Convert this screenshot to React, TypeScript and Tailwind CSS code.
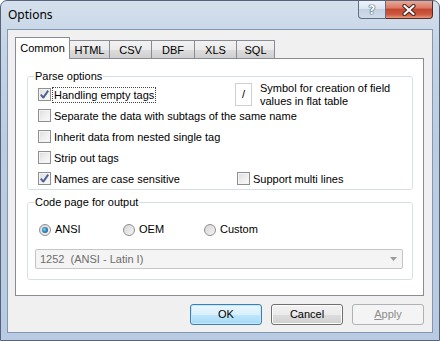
import React from "react";

function Check({ checked }: { checked?: boolean }) {
  return (
    <span className="relative flex h-[13px] w-[13px] shrink-0 items-center justify-center border border-[#8e8f8f] bg-[linear-gradient(135deg,#dcdcdc_0%,#eeeeee_50%,#fbfbfb_100%)] shadow-[inset_0_0_0_1px_#f4f4f4]">
      {checked && (
        <svg width="11" height="11" viewBox="0 0 11 11" className="absolute left-[0px] top-[0px]">
          <path d="M1.8 5.6 L4.3 8.6 L9.2 1.6" fill="none" stroke="#4b5f97" strokeWidth="1.9" strokeLinejoin="round" />
        </svg>
      )}
    </span>
  );
}

function Radio({ checked }: { checked?: boolean }) {
  return (
    <span className="flex h-[12px] w-[12px] shrink-0 items-center justify-center rounded-full border border-[#8e8f8f] bg-[linear-gradient(135deg,#d6d6d6_0%,#f4f4f4_100%)]">
      {checked && (
        <span className="h-[6px] w-[6px] rounded-full bg-[radial-gradient(circle_at_40%_40%,#7ed0f4_0%,#2a78b0_55%,#1c4f86_100%)]" />
      )}
    </span>
  );
}

function Row({ children }: { children: React.ReactNode }) {
  return <div className="flex h-[21px] items-center">{children}</div>;
}

function CheckItem({ checked, label, focus }: { checked?: boolean; label: string; focus?: boolean }) {
  return (
    <div className="flex items-center">
      <Check checked={checked} />
      {focus ? (
        <span className="ml-[1px] border border-dotted border-[#444] px-[1px] leading-[14px]">{label}</span>
      ) : (
        <span className="ml-[3px] leading-[14px]">{label}</span>
      )}
    </div>
  );
}

const tabs = [
  { name: "HTML", w: "w-[40px]" },
  { name: "CSV", w: "w-[42px]" },
  { name: "DBF", w: "w-[43px]" },
  { name: "XLS", w: "w-[42px]" },
  { name: "SQL", w: "w-[38px]" },
];

export default function App() {
  return (
    <div className="h-[341px] w-[440px] bg-white font-['Liberation_Sans',Arial,sans-serif] text-[11px] text-black">
      <div className="flex h-full w-full flex-col overflow-hidden rounded-t-[7px] border border-[#56637a] bg-[linear-gradient(180deg,#d5e0ec_0%,#c6d5e6_12%,#bccde2_40%,#b9cbe2_100%)]">
        {/* title bar */}
        <div className="flex h-[28px] shrink-0 items-start justify-between">
          <div className="pl-[7px] pt-[6px] font-['Noto_Sans',sans-serif] text-[12px] leading-[16px] text-black">Options</div>
          <div className="mr-[6px] flex h-[18px]">
            <div className="flex w-[28px] items-center justify-center rounded-bl-[4px] border border-t-0 border-[#5f6e84] bg-[linear-gradient(180deg,#eef3f9_0%,#dbe5f0_45%,#c3d2e3_50%,#cfdcea_100%)] font-['DejaVu_Sans',sans-serif] text-[12px] font-bold text-white [text-shadow:0_0_1px_#33445c,0_0_1px_#33445c,0_0_1px_#33445c]">
              ?
            </div>
            <div className="flex w-[47px] items-center justify-center rounded-br-[4px] border border-l-0 border-t-0 border-[#5b2a24] bg-[linear-gradient(180deg,#e9a898_0%,#d97a66_40%,#c54630_50%,#cc5a40_80%,#e59a7e_100%)]">
              <svg width="14" height="12" viewBox="0 0 14 12">
                <path d="M2.5 2 L11.5 10 M11.5 2 L2.5 10" stroke="#4a2019" strokeWidth="4.2" strokeLinecap="round" />
                <path d="M2.5 2 L11.5 10 M11.5 2 L2.5 10" stroke="#ffffff" strokeWidth="2.2" strokeLinecap="round" />
              </svg>
            </div>
          </div>
        </div>

        {/* client */}
        <div className="mx-[6px] mb-[7px] flex flex-1 flex-col border border-[#8297b1] bg-[#f0f0f0] pl-[7px] pr-[8px] pt-[7px]">
          {/* tabs */}
          <div className="relative z-10 -mb-px flex h-[22px] items-end">
            <div className="flex h-[22px] w-[55px] items-start justify-center border border-b-0 border-[#898c95] bg-white pt-[3px] leading-[14px]">
              Common
            </div>
            {tabs.map((t) => (
              <div
                key={t.name}
                className={`flex h-[19px] ${t.w} items-center justify-center border border-l-0 border-[#898c95] bg-[linear-gradient(180deg,#f2f2f2_0%,#ebebeb_50%,#dddddd_51%,#cfcfcf_100%)] leading-[14px]`}
              >
                {t.name}
              </div>
            ))}
          </div>

          {/* panel */}
          <div className="flex h-[238px] flex-col border border-[#898c95] bg-white pl-[11px] pr-[10px] pt-[10px]">
            <fieldset className="rounded-[3px] border border-[#d5dfe5] pl-[10px] pr-[6px]">
              <legend className="-ml-[4px] px-[1px] leading-[15px]">Parse options</legend>
              <Row>
                <div className="w-[197px]">
                  <CheckItem checked focus label="Handling empty tags" />
                </div>
                <div className="flex items-center">
                  <div className="flex h-[23px] w-[17px] items-center justify-center border border-[#d0d0d0] bg-white">/</div>
                  <div className="ml-[8px] leading-[13px]">
                    Symbol for creation of field
                    <br />
                    values in flat table
                  </div>
                </div>
              </Row>
              <Row>
                <CheckItem label="Separate the data with subtags of the same name" />
              </Row>
              <Row>
                <CheckItem label="Inherit data from nested single tag" />
              </Row>
              <Row>
                <CheckItem label="Strip out tags" />
              </Row>
              <Row>
                <div className="w-[199px]">
                  <CheckItem checked label="Names are case sensitive" />
                </div>
                <CheckItem label="Support multi lines" />
              </Row>
            </fieldset>

            <fieldset className="mt-[5px] rounded-[3px] border border-[#d5dfe5] pb-[10px] pl-[7px] pr-[9px]">
              <legend className="-ml-[1px] px-[1px] leading-[15px]">Code page for output</legend>
              <div className="mt-[9px] flex h-[21px] items-center pl-[4px]">
                <div className="flex w-[84px] items-center">
                  <Radio checked />
                  <span className="ml-[4px]">ANSI</span>
                </div>
                <div className="flex w-[81px] items-center">
                  <Radio />
                  <span className="ml-[4px]">OEM</span>
                </div>
                <div className="flex items-center">
                  <Radio />
                  <span className="ml-[4px]">Custom</span>
                </div>
              </div>
              <div className="mt-[9px] flex h-[20px] items-center justify-between rounded-[2px] border border-[#c5c5c5] bg-[#f4f4f4] pl-[4px] pr-[5px] text-[#6d6d6d]">
                <span className="whitespace-pre">1252  (ANSI - Latin I)</span>
                <svg width="7" height="4" viewBox="0 0 7 4">
                  <path d="M0 0 L7 0 L3.5 4 Z" fill="#9a9a9a" />
                </svg>
              </div>
            </fieldset>
          </div>

          {/* buttons */}
          <div className="mt-[8px] flex justify-end gap-[9px]">
            <div className="flex h-[21px] w-[72px] items-center justify-center rounded-[3px] border border-[#3c7fb1] bg-[linear-gradient(180deg,#eaf6fd_0%,#d9f0fc_50%,#bee6fd_51%,#a7d9f5_100%)] shadow-[inset_0_0_0_1px_#c4e7fb]">
              OK
            </div>
            <div className="flex h-[21px] w-[72px] items-center justify-center rounded-[3px] border border-[#707070] bg-[linear-gradient(180deg,#f2f2f2_0%,#ebebeb_50%,#dddddd_51%,#cfcfcf_100%)] shadow-[inset_0_0_0_1px_#fcfcfc]">
              Cancel
            </div>
            <div className="flex h-[21px] w-[72px] items-center justify-center rounded-[3px] border border-[#adb2b5] bg-[#f4f4f4] text-[#8d8d8d]">
              <span>
                <span className="underline">A</span>pply
              </span>
            </div>
          </div>
        </div>
      </div>
    </div>
  );
}
